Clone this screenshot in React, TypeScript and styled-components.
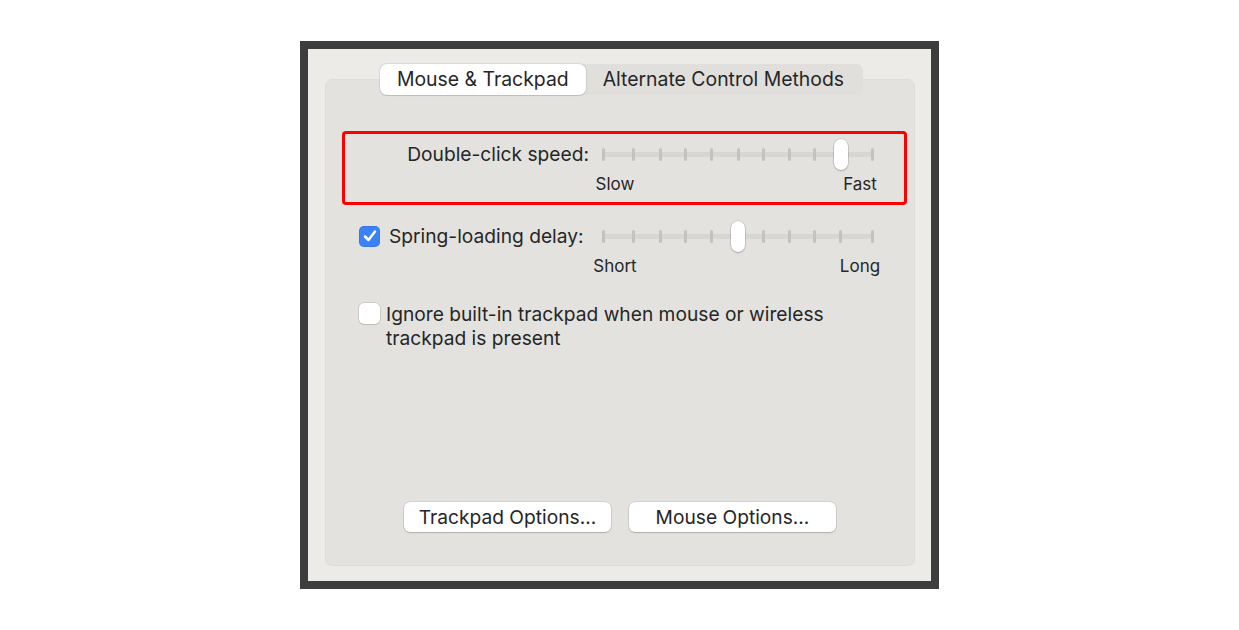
import React from "react";
import styled, { createGlobalStyle } from "styled-components";

const Global = createGlobalStyle`
  html, body { margin: 0; padding: 0; background: #ffffff; }
  body { font-family: Inter, "Noto Sans", "Liberation Sans", sans-serif; color: #262626; }
  * { box-sizing: border-box; }
`;

const Page = styled.div`
  display: flex;
  justify-content: center;
  padding-top: 41px;
  height: 630px;
`;

const Frame = styled.div`
  width: 639px;
  height: 548px;
  border: 8px solid #3d3d3d;
  background: #ecebe8;
  display: flex;
  flex-direction: column;
  padding: 15px 16px 15px 17px;
`;

const TabBar = styled.div`
  align-self: center;
  margin-left: 3px;
  display: flex;
  height: 31px;
  border-radius: 7px;
  background: #e0dfdc;
  position: relative;
  z-index: 1;
`;

const Tab = styled.div<{ $active?: boolean }>`
  height: 31px;
  padding: 0 ${(p) => (p.$active ? "17px" : "19px")} 1px 17px;
  display: flex;
  align-items: center;
  font-size: 19.4px;
  color: #262626;
  border-radius: 7px;
  background: ${(p) => (p.$active ? "#ffffff" : "transparent")};
  box-shadow: ${(p) => (p.$active ? "0 0 0 1px rgba(0,0,0,0.07), 0 1px 1px rgba(0,0,0,0.1)" : "none")};
`;

const Group = styled.div`
  flex: 1;
  margin-top: -16px;
  background: #e3e2df;
  border: 1px solid #dddcd9;
  border-radius: 7px;
  display: flex;
  flex-direction: column;
  padding: 51px 7px 33px 16px;
`;

const Highlight = styled.div`
  border: 3px solid #ff0000;
  border-radius: 4px;
  height: 74px;
  padding-top: 5px;
`;

const SettingRow = styled.div`
  display: grid;
  grid-template-columns: 251px 284px;
  align-items: center;
`;

const LabelCell = styled.div<{ $align: "left" | "right" }>`
  display: flex;
  align-items: center;
  justify-content: ${(p) => (p.$align === "right" ? "flex-end" : "flex-start")};
  padding-right: 7px;
  padding-left: ${(p) => (p.$align === "left" ? "14px" : "0")};
  gap: 9px;
  height: 30px;
`;

const RowLabel = styled.span`
  font-size: 19.2px;
  white-space: nowrap;
`;

const Slider = styled.div`
  height: 30px;
  padding: 0 7px;
  display: flex;
  align-items: center;
`;

const Track = styled.div`
  position: relative;
  flex: 1;
  height: 5px;
  border-radius: 3px;
  background: #d7d6d3;
`;

const Tick = styled.div`
  position: absolute;
  top: -4px;
  width: 3px;
  height: 13px;
  margin-left: -1.5px;
  border-radius: 1.5px;
  background: #c3c2bf;
`;

const Thumb = styled.div`
  position: absolute;
  top: -13px;
  width: 14px;
  height: 31px;
  margin-left: -7px;
  border-radius: 7px;
  background: #ffffff;
  box-shadow: 0 0 0 0.5px rgba(0, 0, 0, 0.18), 0 1px 2px rgba(0, 0, 0, 0.2);
`;

const EndLabels = styled.div`
  display: flex;
  justify-content: space-between;
  margin-left: 248px;
  width: 289px;
  height: 22px;
  margin-top: 4px;
`;

const EndLabel = styled.span`
  width: 44px;
  text-align: center;
  font-size: 17px;
  line-height: 22px;
  color: #262626;
`;

const PlainSection = styled.div<{ $top: number }>`
  margin-top: ${(p) => p.$top}px;
  padding-left: 3px;
`;

const CheckBox = styled.div<{ $checked?: boolean }>`
  flex: none;
  width: 21px;
  height: 21px;
  border-radius: 5px;
  background: ${(p) => (p.$checked ? "#3b82f6" : "#ffffff")};
  box-shadow: ${(p) =>
    p.$checked ? "inset 0 0 0 0.5px rgba(0,0,0,0.15)" : "0 0 0 0.5px rgba(0,0,0,0.2), 0 1px 1px rgba(0,0,0,0.08)"};
  display: flex;
  align-items: center;
  justify-content: center;
`;

const CheckRow = styled.div`
  display: flex;
  align-items: flex-start;
  gap: 6px;
  padding-left: 14px;
`;

const WrapText = styled.div`
  font-size: 19.2px;
  line-height: 24px;
  width: 460px;
  margin-top: -1px;
`;

const ButtonRow = styled.div`
  margin-top: auto;
  display: flex;
  justify-content: center;
  gap: 18px;
  padding-right: 9px;
`;

const Button = styled.button`
  width: 207px;
  height: 30px;
  border: none;
  border-radius: 6px;
  background: #ffffff;
  box-shadow: 0 0 0 0.5px rgba(0, 0, 0, 0.14), 0 1px 1.5px rgba(0, 0, 0, 0.18);
  font-family: inherit;
  font-size: 19.2px;
  color: #262626;
  padding: 0;
`;

// tick offsets (px) along the track, as drawn by the system control
const TICKS = [0, 30, 57.4, 82.7, 108.4, 135, 160.7, 186, 211.7, 237.7, 269.4];

function SliderControl({ value }: { value: number }) {
  return (
    <Slider>
      <Track>
        {TICKS.map((x, i) => (
          <Tick key={i} style={{ left: `${x}px` }} />
        ))}
        <Thumb style={{ left: `${TICKS[value]}px` }} />
      </Track>
    </Slider>
  );
}

const Check = () => (
  <svg width="16" height="16" viewBox="0 0 16 16">
    <path d="M3 8.5 L6.5 12 L13 3.5" fill="none" stroke="#fff" strokeWidth="2.5" strokeLinecap="round" strokeLinejoin="round" />
  </svg>
);

export default function App() {
  return (
    <>
      <Global />
      <Page>
        <Frame>
          <TabBar>
            <Tab $active>Mouse &amp; Trackpad</Tab>
            <Tab>Alternate Control Methods</Tab>
          </TabBar>
          <Group>
            <Highlight>
              <SettingRow>
                <LabelCell $align="right">
                  <RowLabel>Double-click speed:</RowLabel>
                </LabelCell>
                <SliderControl value={9} />
              </SettingRow>
              <EndLabels>
                <EndLabel>Slow</EndLabel>
                <EndLabel>Fast</EndLabel>
              </EndLabels>
            </Highlight>
            <PlainSection $top={16}>
              <SettingRow>
                <LabelCell $align="left">
                  <CheckBox $checked>
                    <Check />
                  </CheckBox>
                  <RowLabel>Spring-loading delay:</RowLabel>
                </LabelCell>
                <SliderControl value={5} />
              </SettingRow>
              <EndLabels>
                <EndLabel>Short</EndLabel>
                <EndLabel>Long</EndLabel>
              </EndLabels>
            </PlainSection>
            <PlainSection $top={26}>
              <CheckRow>
                <CheckBox />
                <WrapText>Ignore built-in trackpad when mouse or wireless trackpad is present</WrapText>
              </CheckRow>
            </PlainSection>
            <ButtonRow>
              <Button>Trackpad Options...</Button>
              <Button>Mouse Options...</Button>
            </ButtonRow>
          </Group>
        </Frame>
      </Page>
    </>
  );
}
